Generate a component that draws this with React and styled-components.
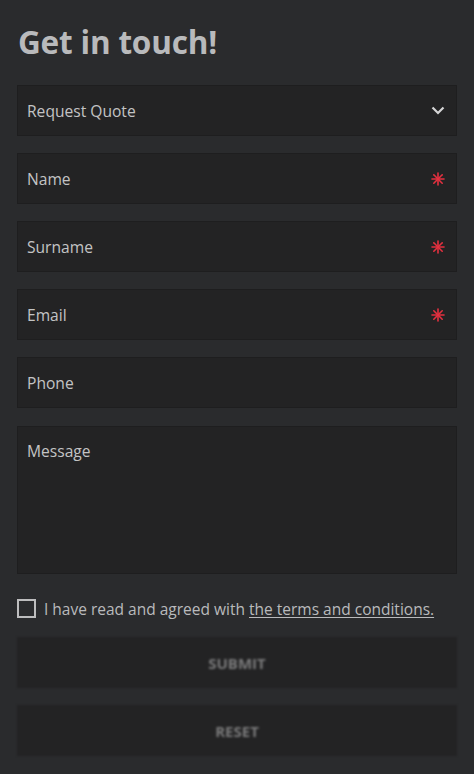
import React from 'react';
import styled, { createGlobalStyle } from 'styled-components';

const GlobalStyle = createGlobalStyle`
  html, body {
    margin: 0;
    padding: 0;
    background: #2a2b2d;
  }
  body {
    font-family: 'Open Sans', 'Liberation Sans', sans-serif;
  }
`;

const Panel = styled.form`
  width: 474px;
  min-height: 774px;
  box-sizing: border-box;
  padding: 20px 17px 18px;
  background: #2a2b2d;
  display: flex;
  flex-direction: column;
`;

const Title = styled.h1`
  margin: 0 0 22px 1px;
  font-size: 31.5px;
  line-height: 43px;
  font-weight: 700;
  color: #b9babc;
  letter-spacing: -0.2px;
`;

const Fields = styled.div`
  display: flex;
  flex-direction: column;
  gap: 17px;
`;

const Field = styled.div`
  height: ${({ $tall }) => ($tall ? '148px' : '51px')};
  margin-top: ${({ $tall }) => ($tall ? '1px' : '0')};
  box-sizing: border-box;
  background: #232324;
  border: 1px solid #1e1e1f;
  padding: ${({ $tall }) => ($tall ? '13px 12px 0 9px' : '0 11px 0 9px')};
  display: flex;
  align-items: ${({ $tall }) => ($tall ? 'flex-start' : 'center')};
  justify-content: space-between;
  color: #c3c3c4;
  font-size: 15.6px;
`;

const Star = () => (
  <svg width="14" height="14" viewBox="0 0 14 14">
    <g stroke="#e3303f" strokeWidth="1.6" strokeLinecap="round">
      <line x1="7" y1="1" x2="7" y2="13" />
      <line x1="1" y1="7" x2="13" y2="7" />
      <line x1="2.8" y1="2.8" x2="11.2" y2="11.2" />
      <line x1="11.2" y1="2.8" x2="2.8" y2="11.2" />
    </g>
  </svg>
);

const Chevron = () => (
  <svg width="14" height="9" viewBox="0 0 14 9">
    <path d="M1.5 1.5 L7 7 L12.5 1.5" fill="none" stroke="#d5d5d6" strokeWidth="2.2" />
  </svg>
);

const Agree = styled.label`
  margin: 25px 0 19px;
  display: flex;
  align-items: center;
  gap: 8px;
  color: #b9babc;
  font-size: 15.5px;
  line-height: 18px;
`;

const Box = styled.span`
  width: 19px;
  height: 19px;
  box-sizing: border-box;
  border: 2px solid #bdbdbe;
  flex-shrink: 0;
`;

const Terms = styled.a`
  color: #b9babc;
  text-decoration: underline;
  text-underline-offset: 2px;
`;

const Buttons = styled.div`
  display: flex;
  flex-direction: column;
  gap: 17px;
`;

const Button = styled.button`
  height: 51px;
  background: #232324;
  border: none;
  font-family: 'Open Sans', 'Liberation Sans', sans-serif;
  font-size: 15px;
  font-weight: 700;
  color: #7a7a7b;
  letter-spacing: 0;
  filter: blur(0.9px);
`;

export default function App() {
  const fields = [
    { label: 'Name', required: true },
    { label: 'Surname', required: true },
    { label: 'Email', required: true },
    { label: 'Phone' },
  ];
  return (
    <>
      <GlobalStyle />
      <Panel>
        <Title>Get in touch!</Title>
        <Fields>
          <Field>
            <span>Request Quote</span>
            <Chevron />
          </Field>
          {fields.map((f) => (
            <Field key={f.label}>
              <span>{f.label}</span>
              {f.required ? <Star /> : null}
            </Field>
          ))}
          <Field $tall>
            <span>Message</span>
          </Field>
        </Fields>
        <Agree>
          <Box />
          <span>
            I have read and agreed with <Terms>the terms and conditions.</Terms>
          </span>
        </Agree>
        <Buttons>
          <Button type="button">SUBMIT</Button>
          <Button type="button">RESET</Button>
        </Buttons>
      </Panel>
    </>
  );
}
